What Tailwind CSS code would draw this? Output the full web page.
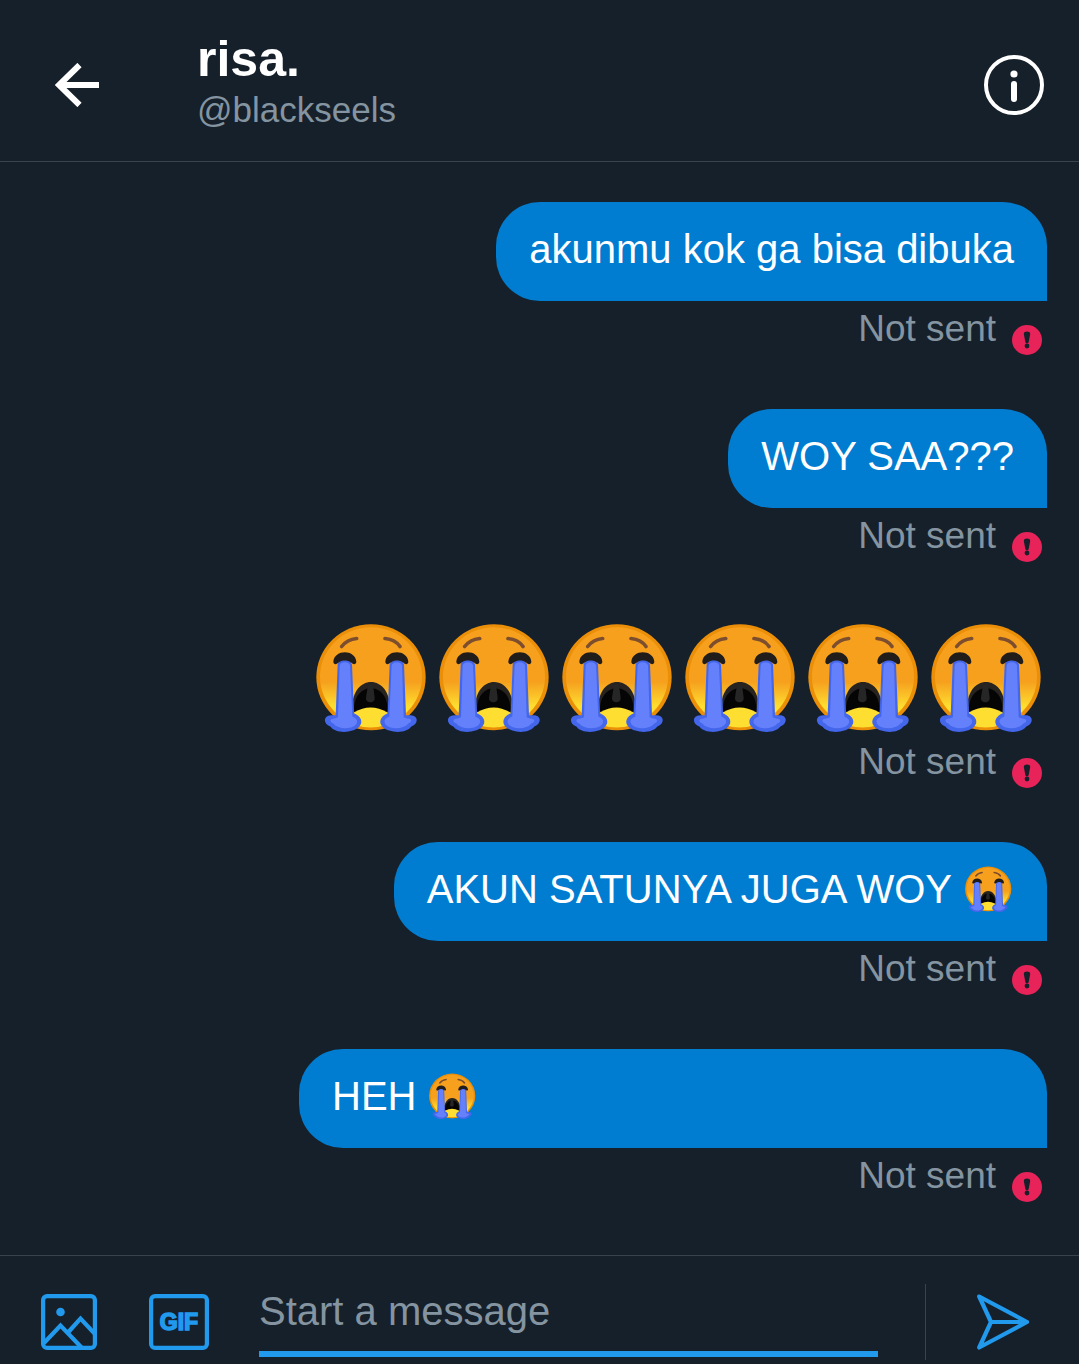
<!DOCTYPE html>
<html lang="id">
<head>
  <meta charset="UTF-8" />
  <meta name="viewport" content="width=device-width, initial-scale=1.0"/>
  <title>risa. (@blackseels)</title>
  <script src="https://cdn.jsdelivr.net/npm/@tailwindcss/browser@4"></script>
</head>
<body class="bg-[#16202a] text-white font-['Liberation_Sans',Arial,sans-serif] min-h-screen flex flex-col">

  <!-- Shared icons (kept rendered at zero size so the gradient still resolves) -->
  <svg class="absolute size-0" aria-hidden="true">
    <defs>
      <linearGradient id="face" x1="0" y1="0" x2="0" y2="1">
        <stop offset="0.55" stop-color="#f6a01e"/>
        <stop offset="0.8" stop-color="#fede30"/>
        <stop offset="1" stop-color="#fede30"/>
      </linearGradient>
    </defs>
    <symbol id="sob" viewBox="27 36 369 332">
      <ellipse cx="213" cy="198" rx="164" ry="159" fill="#eb8f09"/>
      <ellipse cx="213" cy="197" rx="153" ry="149" fill="url(#face)"/>
      <path d="M125 106q16-21 45-24M255 82q31 3 45 24" fill="none" stroke="#7d4e2d" stroke-width="11" stroke-linecap="round"/>
      <path d="M100 152c3-38 66-38 69 0 0 8-9 10-14 3l-41 0c-5 7-14 5-14-3zM256 152c3-38 66-38 69 0 0 8-9 10-14 3l-41 0c-5 7-14 5-14-3z" fill="#211d1b"/>
      <path d="M156 304c-8-122 122-122 114 0z" fill="#262320"/>
      <path d="M162 300c-4-92 106-92 100 0z" fill="#050505"/>
      <path d="M204 220h15l5 40c2 18-28 18-26 0z" fill="#262626"/>
      <path d="M162 304q50-30 100 0v36q-50 18-100 0z" fill="#fede30"/>
      <g id="tear">
        <path d="M113 160c4-16 38-16 43 0l6 146c32 14 28 42-5 52-22 8-54 5-66-12-22-8-22-34 2-34h14z" fill="#4366ea"/>
        <path d="M119 162c4-12 28-12 31 0l7 154c22 8 18 26-4 33-18 5-42 2-53-12-14-6-10-15 4-15l10-4z" fill="#6480fb"/>
      </g>
      <use href="#tear" transform="matrix(-1 0 0 1 425 0)"/>
    </symbol>
    <symbol id="failed" viewBox="0 0 30 30">
      <circle cx="15" cy="15" r="15" fill="#e72359"/>
      <path d="M11.800 9c0-3.200 6.400-3.200 6.400 0l-1.500 8c-.4 1.800-3 1.800-3.400 0z" fill="#16202a"/>
      <circle cx="15" cy="21" r="2.400" fill="#16202a"/>
    </symbol>
  </svg>

  <!-- Header -->
  <header class="flex items-center pl-[55px] pr-[35px] pt-[34px] pb-[25px] border-b border-[#38444d]">
    <button type="button" aria-label="Back" class="shrink-0">
      <svg class="w-11 h-11" viewBox="0 0 44 44" fill="none" stroke="currentColor" stroke-width="6"><path d="M44 22H5M24.500 2L4 22l20.500 20"/></svg>
    </button>
    <div class="flex-1 min-w-0 ml-[98px]">
      <h1 class="text-[50px] leading-[50px] font-bold">risa.</h1>
      <p class="text-[35px] leading-[52px] text-[#8494a0]">@blackseels</p>
    </div>
    <button type="button" aria-label="Conversation info" class="shrink-0">
      <svg class="w-15 h-15" viewBox="0 0 60 60" fill="none" stroke="currentColor"><circle cx="30" cy="30" r="28" stroke-width="4"/><path d="M30 29v15" stroke-width="6" stroke-linecap="round"/><circle cx="30" cy="19" r="3.600" fill="currentColor" stroke="none"/></svg>
    </button>
  </header>

  <!-- Messages -->
  <main class="flex-1 flex flex-col items-end gap-[52px] px-8 pt-10 pb-[51px]">
    <article class="flex flex-col items-end">
      <p class="rounded-[44px] rounded-br-none bg-[#007dd1] px-[33px] pt-[23px] pb-7 text-[40px] leading-[48px]">akunmu kok ga bisa dibuka</p>
      <div class="flex items-center gap-4 h-14 pr-[5px] text-[37px] text-[#8494a0]">Not sent
        <svg class="size-[30px] self-end mb-0.5"><use href="#failed"/></svg>
      </div>
    </article>

    <article class="flex flex-col items-end">
      <p class="rounded-[44px] rounded-br-none bg-[#007dd1] px-[33px] pt-[23px] pb-7 text-[40px] leading-[48px]">WOY SAA???</p>
      <div class="flex items-center gap-4 h-14 pr-[5px] text-[37px] text-[#8494a0]">Not sent
        <svg class="size-[30px] self-end mb-0.5"><use href="#failed"/></svg>
      </div>
    </article>

    <article class="flex flex-col items-end">
      <div class="flex pt-[7px]" role="img" aria-label="Loudly crying faces">
        <svg class="w-[123px] h-[111px]"><use href="#sob"/></svg>
        <svg class="w-[123px] h-[111px]"><use href="#sob"/></svg>
        <svg class="w-[123px] h-[111px]"><use href="#sob"/></svg>
        <svg class="w-[123px] h-[111px]"><use href="#sob"/></svg>
        <svg class="w-[123px] h-[111px]"><use href="#sob"/></svg>
        <svg class="w-[123px] h-[111px]"><use href="#sob"/></svg>
      </div>
      <div class="flex items-center gap-4 h-14 pr-[5px] text-[37px] text-[#8494a0]">Not sent
        <svg class="size-[30px] self-end mb-0.5"><use href="#failed"/></svg>
      </div>
    </article>

    <article class="flex flex-col items-end">
      <p class="flex items-center gap-[10px] rounded-[44px] rounded-br-none bg-[#007dd1] px-[33px] pt-[23px] pb-7 text-[40px] leading-[48px]">AKUN SATUNYA JUGA WOY
        <svg class="w-[52px] h-[47px]" role="img" aria-label="Loudly crying face"><use href="#sob"/></svg>
      </p>
      <div class="flex items-center gap-4 h-14 pr-[5px] text-[37px] text-[#8494a0]">Not sent
        <svg class="size-[30px] self-end mb-0.5"><use href="#failed"/></svg>
      </div>
    </article>

    <article class="flex flex-col items-end max-w-full">
      <p class="flex items-center gap-[10px] w-[748px] max-w-full rounded-[44px] rounded-br-none bg-[#007dd1] px-[33px] pt-[23px] pb-7 text-[40px] leading-[48px]">HEH
        <svg class="w-[52px] h-[47px]" role="img" aria-label="Loudly crying face"><use href="#sob"/></svg>
      </p>
      <div class="flex items-center gap-4 h-14 pr-[5px] text-[37px] text-[#8494a0]">Not sent
        <svg class="size-[30px] self-end mb-0.5"><use href="#failed"/></svg>
      </div>
    </article>
  </main>

  <!-- Composer -->
  <form class="flex items-center pl-[41px] pr-[50px] pt-7 pb-1 border-t border-[#38444d] text-[#2199ec]">
    <button type="button" aria-label="Add photo" class="shrink-0">
      <svg class="size-14" viewBox="0 0 56 56" fill="none" stroke="currentColor" stroke-width="4.200"><rect x="2.100" y="2.100" width="51.800" height="51.800" rx="4"/><path d="M3 49l16.500-17.500L41 54M27 38.500l12.500-14L54 40"/><circle cx="19.500" cy="18" r="4.300" fill="currentColor" stroke="none"/></svg>
    </button>
    <button type="button" aria-label="Add GIF" class="shrink-0 ml-[52px]">
      <svg class="w-15 h-14" viewBox="0 0 60 56"><rect x="2.100" y="2.100" width="55.800" height="51.800" rx="4" fill="none" stroke="currentColor" stroke-width="4.200"/><text x="30" y="36" text-anchor="middle" font-size="23" font-weight="bold" fill="currentColor" stroke="currentColor" stroke-width="1.600">GIF</text></svg>
    </button>
    <input type="text" aria-label="Start a message" placeholder="Start a message" class="flex-1 min-w-0 self-start h-[73px] ml-[50px] pb-[13px] border-b-6 border-[#2199ec] text-[40px] text-white placeholder:text-[#8494a0] outline-none"/>
    <div class="w-px h-19 ml-[47px] bg-[#38444d]"></div>
    <button type="submit" aria-label="Send" class="shrink-0 ml-[51px]">
      <svg class="w-[52px] h-14" viewBox="0 0 52 56" fill="none" stroke="currentColor" stroke-width="4.200" stroke-linecap="round" stroke-linejoin="round"><path d="M2.200 2.500L50 28 2.200 53.500 14 28zM14 28h36"/></svg>
    </button>
  </form>
</body>
</html>
